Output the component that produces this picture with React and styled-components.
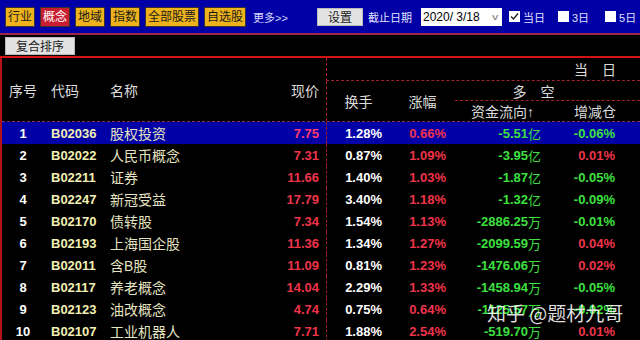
import React from 'react';
import styled, { createGlobalStyle } from 'styled-components';

const GlobalStyle = createGlobalStyle`
  html, body {
    margin: 0;
    padding: 0;
    background: #000;
    overflow: hidden;
  }
  * { box-sizing: border-box; }
`;

const FONT = '"Liberation Sans", "Noto Sans CJK SC", sans-serif';
const COLS = '42px 61px 145px 76px 64px 65px 95px 90px';

const Screen = styled.div`
  position: relative;
  width: 640px;
  height: 340px;
  overflow: hidden;
  background: #000;
  font-family: ${FONT};
`;

const TopBar = styled.div`
  display: flex;
  align-items: center;
  height: 33px;
  padding-left: 5px;
  gap: 5px;
  background: #0000a6;
  overflow: hidden;
  white-space: nowrap;
  & > * { flex-shrink: 0; }
`;

const Tab = styled.div`
  height: 20px;
  padding: 0 2px;
  display: flex;
  align-items: center;
  font-size: 12px;
  line-height: 1;
  color: ${p => (p.$active ? '#fff' : '#1a1a1a')};
  background: ${p => (p.$active ? '#c81e32' : '#eeb21c')};
  border: 1px solid #3a3030;
`;

const More = styled.span`
  margin-left: 2px;
  font-size: 11px;
  color: #d6d6ff;
`;

const Button = styled.div`
  width: ${p => p.$width}px;
  height: 18px;
  margin-left: ${p => p.$offset || 0}px;
  display: flex;
  align-items: center;
  justify-content: center;
  font-size: 12px;
  color: #202020;
  background: #e2e2e2;
  border: 1px solid #b8b8b8;
  white-space: nowrap;
`;

const Label = styled.span`
  font-size: 11px;
  color: #e2e2ff;
`;

const DateSelect = styled.div`
  width: 81px;
  height: 18px;
  margin-left: 4px;
  padding: 0 4px 0 2px;
  display: flex;
  align-items: center;
  justify-content: space-between;
  background: #fff;
  font-size: 12px;
  color: #000;
  white-space: pre;
`;

const Chevron = styled.span`
  color: #777;
  font-size: 9px;
  transform: scaleX(1.4);
`;

const CheckItem = styled.div`
  display: flex;
  align-items: center;
  gap: 3px;
  margin-left: ${p => p.$offset}px;
  font-size: 11px;
  color: #e2e2ff;
`;

const Box = styled.div`
  width: 11px;
  height: 11px;
  background: #fff;
  display: flex;
  align-items: center;
  justify-content: center;
`;

const Divider = styled.div`
  height: 2px;
  background: ${p => p.$color};
`;

const SortBar = styled.div`
  height: 21px;
  padding-left: 5px;
  display: flex;
  align-items: center;
  background: #000;
`;

const Table = styled.div`
  border-left: 2px solid #b01418;
`;

const Header = styled.div`
  display: grid;
  grid-template-columns: ${COLS};
  grid-template-rows: 23px 20px 20px;
  height: 64px;
  border-bottom: 1px dashed #8a2a6a;
  color: #dcdcdc;
  font-size: 14px;
`;

const HeadCell = styled.div`
  grid-column: ${p => p.$col};
  grid-row: ${p => p.$row};
  display: flex;
  align-items: center;
  justify-content: ${p => p.$justify || 'center'};
  padding: ${p => p.$pad || '0'};
  border-left: ${p => (p.$divider ? '1px dashed #b02020' : 'none')};
  border-bottom: ${p => (p.$under ? '1px dashed #a02030' : 'none')};
  letter-spacing: ${p => p.$spacing || 0}px;
`;

const Row = styled.div`
  display: grid;
  grid-template-columns: ${COLS};
  height: 22px;
  align-items: center;
  background: ${p => (p.$selected ? '#0000a6' : '#000')};
`;

const Cell = styled.div`
  height: 100%;
  display: flex;
  align-items: center;
  justify-content: ${p => p.$justify || 'flex-end'};
  padding: ${p => p.$pad || '0'};
  color: ${p => p.$color || '#fff'};
  font-weight: ${p => (p.$light ? 'normal' : 'bold')};
  font-size: ${p => p.$size || 13}px;
  border-left: ${p => (p.$divider ? '1px dashed #a02020' : 'none')};
  white-space: nowrap;
`;

const Unit = styled.span`
  font-weight: normal;
  font-size: 13px;
`;

const Watermark = styled.div`
  position: absolute;
  left: 487px;
  top: 299px;
  font-family: "Noto Sans CJK SC", sans-serif;
  font-size: 19px;
  color: rgba(255, 255, 255, 0.88);
  white-space: nowrap;
`;

const RED = '#f0344a';
const GREEN = '#3ee040';

const rows = [
  ['1', 'B02036', '股权投资', '7.75', '1.28%', '0.66%', '-5.51', '亿', '-0.06%'],
  ['2', 'B02022', '人民币概念', '7.31', '0.87%', '1.09%', '-3.95', '亿', '0.01%'],
  ['3', 'B02211', '证券', '11.66', '1.40%', '1.03%', '-1.87', '亿', '-0.05%'],
  ['4', 'B02247', '新冠受益', '17.79', '3.40%', '1.18%', '-1.32', '亿', '-0.09%'],
  ['5', 'B02170', '债转股', '7.34', '1.54%', '1.13%', '-2886.25', '万', '-0.01%'],
  ['6', 'B02193', '上海国企股', '11.36', '1.34%', '1.27%', '-2099.59', '万', '0.04%'],
  ['7', 'B02011', '含B股', '11.09', '0.81%', '1.23%', '-1476.06', '万', '0.02%'],
  ['8', 'B02117', '养老概念', '14.04', '2.29%', '1.33%', '-1458.94', '万', '-0.05%'],
  ['9', 'B02123', '油改概念', '4.74', '0.75%', '0.64%', '-1125.57', '万', '-0.02%'],
  ['10', 'B02107', '工业机器人', '7.71', '1.88%', '2.54%', '-519.70', '万', '0.01%'],
];

const tabs = ['行业', '概念', '地域', '指数', '全部股票', '自选股'];

function Check({ checked, label, offset }) {
  return (
    <CheckItem $offset={offset}>
      <Box>
        {checked && (
          <svg width="9" height="9" viewBox="0 0 9 9">
            <path d="M1 4.5 L3.5 7 L8 1.5" stroke="#222" strokeWidth="1.4" fill="none" />
          </svg>
        )}
      </Box>
      {label}
    </CheckItem>
  );
}

export default function App() {
  return (
    <Screen>
      <GlobalStyle />
      <TopBar>
        {tabs.map(t => (
          <Tab key={t} $active={t === '概念'}>{t}</Tab>
        ))}
        <More>更多&gt;&gt;</More>
        <Button $width={46} $offset={24}>设置</Button>
        <Label>截止日期</Label>
        <DateSelect>
          <span>2020/ 3/18</span>
          <Chevron>v</Chevron>
        </DateSelect>
        <Check checked label="当日" offset={2} />
        <Check label="3日" offset={8} />
        <Check label="5日" offset={11} />
      </TopBar>
      <Divider $color="#962848" />
      <SortBar>
        <Button $width={70}>复合排序</Button>
      </SortBar>
      <Divider $color="#d41414" />
      <Table>
        <Header>
          <HeadCell $col="1" $row="1 / 4">序号</HeadCell>
          <HeadCell $col="2" $row="1 / 4" $justify="flex-start" $pad="0 0 0 7px">代码</HeadCell>
          <HeadCell $col="3" $row="1 / 4" $justify="flex-start" $pad="0 0 0 5px">名称</HeadCell>
          <HeadCell $col="4" $row="1 / 4" $justify="flex-end" $pad="0 7px 0 0">现价</HeadCell>
          <HeadCell $col="5 / 9" $row="1" $justify="flex-end" $pad="0 10px 0 0" $divider $under $spacing={14}>当日</HeadCell>
          <HeadCell $col="5" $row="2 / 4" $divider>换手</HeadCell>
          <HeadCell $col="6" $row="2 / 4">涨幅</HeadCell>
          <HeadCell $col="7 / 9" $row="2" $under $pad="0 14px 0 0" $spacing={14}>多空</HeadCell>
          <HeadCell $col="7" $row="3">资金流向↑</HeadCell>
          <HeadCell $col="8" $row="3">增减仓</HeadCell>
        </Header>
        {rows.map(r => (
          <Row key={r[0]} $selected={r[0] === '1'}>
            <Cell $justify="center">{r[0]}</Cell>
            <Cell $justify="flex-start" $pad="0 0 0 7px" $color="#f2f0b0">{r[1]}</Cell>
            <Cell $justify="flex-start" $pad="0 0 0 5px" $color="#e6e4c0" $light $size={14}>{r[2]}</Cell>
            <Cell $pad="0 7px 0 0" $color={r[0] === '1' ? '#ff3c6e' : RED}>{r[3]}</Cell>
            <Cell $pad="0 8px 0 0" $divider>{r[4]}</Cell>
            <Cell $pad="0 9px 0 0" $color={RED}>{r[5]}</Cell>
            <Cell $pad="0 9px 0 0" $color={GREEN}>
              {r[6]}
              <Unit>{r[7]}</Unit>
            </Cell>
            <Cell $pad="0 25px 0 0" $color={r[8].startsWith('-') ? GREEN : RED}>{r[8]}</Cell>
          </Row>
        ))}
      </Table>
      <Watermark>知乎 @题材九哥</Watermark>
    </Screen>
  );
}
